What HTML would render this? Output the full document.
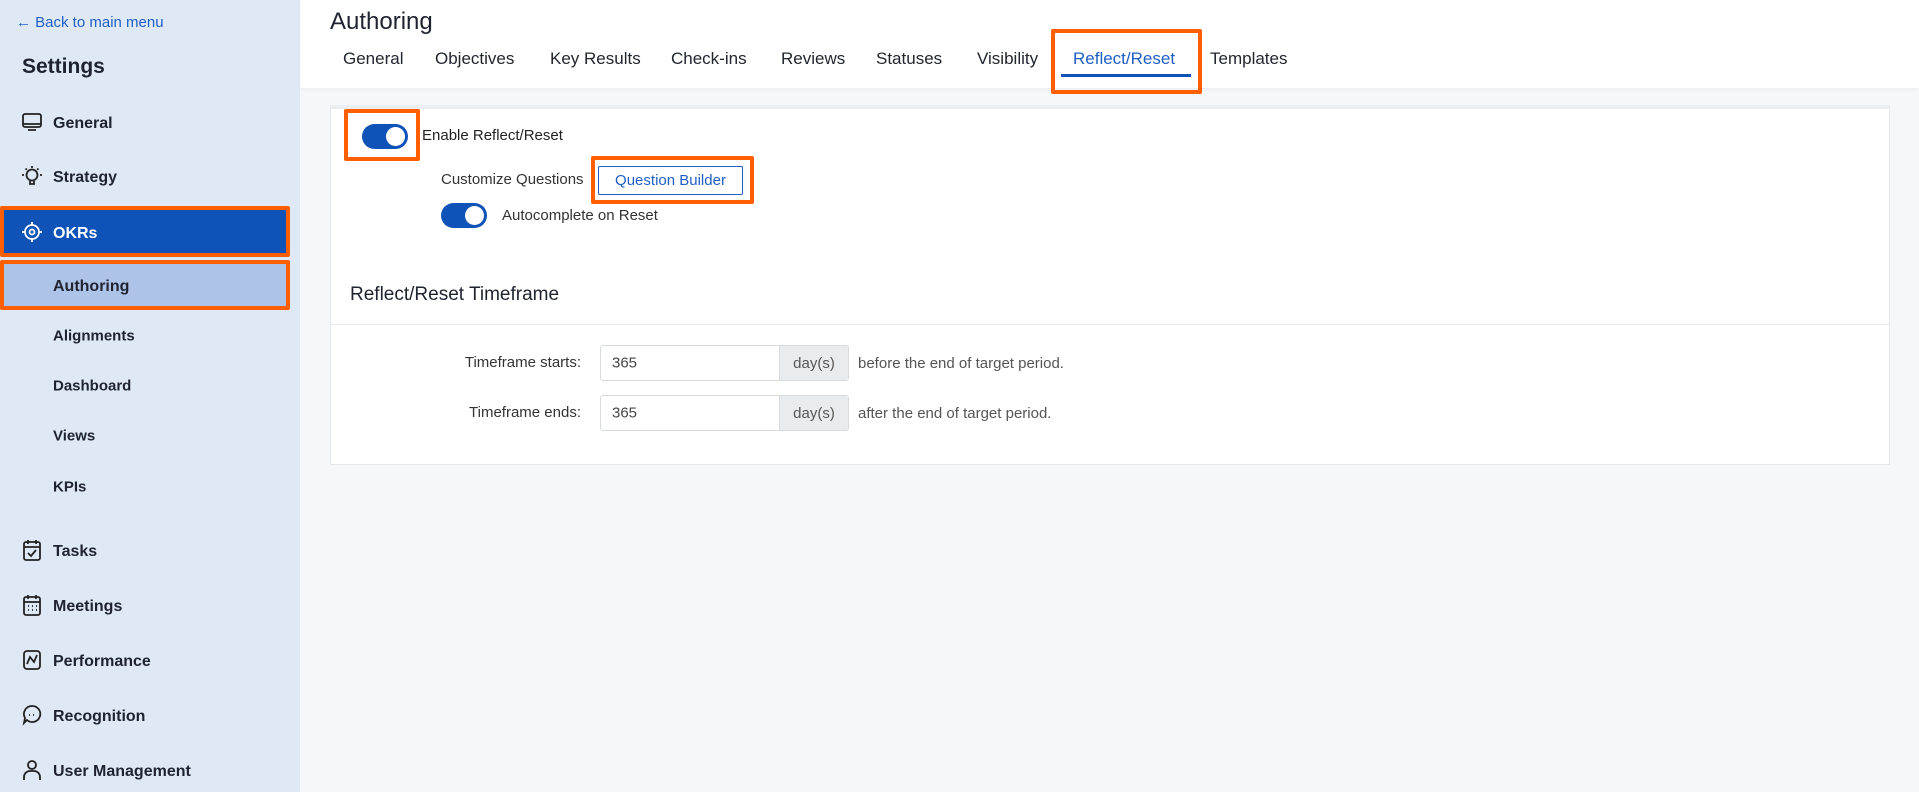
<!DOCTYPE html>
<html><head><meta charset="utf-8"><style>
*{box-sizing:border-box;margin:0;padding:0}
body{width:1919px;height:792px;overflow:hidden;font-family:"Liberation Sans",sans-serif;background:#f5f7fb;position:relative;color:#1f2330}
.sb{position:absolute;left:0;top:0;width:300px;height:792px;background:#dfe9f6}
.abs{position:absolute;white-space:nowrap}
.nav{position:absolute;left:53px;font-size:16px;font-weight:bold;color:#1f2330;transform:translateY(-50%);margin-top:2px}
.ico{position:absolute;left:21px;transform:translateY(-50%)}
.main-h{position:absolute;left:300px;top:0;width:1619px;height:88px;background:#fff;box-shadow:0 2px 4px rgba(0,0,0,.04)}
.tab{position:absolute;top:59px;transform:translateY(-50%);font-size:17px;color:#22262f}
.card{position:absolute;left:330px;top:105px;width:1560px;height:360px;background:#fff;border:1px solid #e4e7ec;border-top:4px solid #eceef2}
.tog{position:absolute;width:46px;height:25px;border-radius:13px;background:#0f53b8}
.tog:after{content:"";position:absolute;right:3px;top:3px;width:19px;height:19px;border-radius:50%;background:#fff}
.ob{position:absolute;border:4px solid #ff5f00;border-radius:2px}
.lbl{font-size:15px;color:#333}
.inp{position:absolute;left:600px;width:249px;height:36px;border:1px solid #d6d9de;border-radius:3px;background:#fff}
.inp span{position:absolute;left:11px;top:50%;transform:translateY(-50%);font-size:15px;color:#444}
.inp i{position:absolute;right:0;top:0;bottom:0;width:69px;background:#e9ecef;border-left:1px solid #d6d9de;font-style:normal;font-size:15px;color:#555;display:flex;align-items:center;justify-content:center}
</style></head><body>
<div class="sb"></div>
<div class="abs" style="left:16px;top:14px;font-size:15px;color:#1f5fc4">← Back to main menu</div>
<div class="abs" style="left:22px;top:55px;font-size:21px;font-weight:bold">Settings</div>

<svg class="ico" style="top:122px" width="22" height="22" viewBox="0 0 22 22" fill="none" stroke="#222" stroke-width="1.8"><rect x="2" y="3" width="18" height="13" rx="2"/><path d="M2 13h18M7 19h8"/></svg>
<div class="nav" style="top:122px">General</div>
<svg class="ico" style="top:176px" width="22" height="24" viewBox="0 0 22 24" fill="none" stroke="#222" stroke-width="1.8"><circle cx="11" cy="11" r="5.5"/><path d="M9 17v3h4v-3M11 2v2M3 11H1M21 11h-2M4.5 4.5l1.3 1.3M17.5 4.5l-1.3 1.3"/></svg>
<div class="nav" style="top:176px">Strategy</div>

<div class="abs" style="left:0;top:208px;width:290px;height:47px;background:#0f53b8"></div>
<div class="ob" style="left:0;top:206px;width:290px;height:51px"></div>
<svg class="ico" style="top:232px" width="22" height="22" viewBox="0 0 22 22" fill="none" stroke="#fff" stroke-width="1.8"><circle cx="11" cy="11" r="7"/><circle cx="11" cy="11" r="2.5"/><path d="M11 1v4M11 17v4M1 11h4M17 11h4"/></svg>
<div class="nav" style="top:232px;color:#fff">OKRs</div>
<div class="abs" style="left:0;top:261px;width:290px;height:47px;background:#aec3e8"></div>
<div class="ob" style="left:0;top:260px;width:290px;height:50px"></div>
<div class="nav" style="top:285px">Authoring</div>
<div class="nav" style="top:334px;font-size:15px">Alignments</div>
<div class="nav" style="top:384px;font-size:15px">Dashboard</div>
<div class="nav" style="top:434px;font-size:15px">Views</div>
<div class="nav" style="top:485px;font-size:15px">KPIs</div>

<svg class="ico" style="top:550px" width="22" height="24" viewBox="0 0 22 24" fill="none" stroke="#222" stroke-width="1.8"><rect x="3" y="4" width="16" height="18" rx="2"/><path d="M7 2v4M15 2v4M3 9h16M7 15l3 3 5-6"/></svg>
<div class="nav" style="top:550px">Tasks</div>
<svg class="ico" style="top:605px" width="22" height="24" viewBox="0 0 22 24" fill="none" stroke="#222" stroke-width="1.8"><rect x="3" y="4" width="16" height="18" rx="2"/><path d="M7 2v4M15 2v4M3 9h16M7 13h1M11 13h1M15 13h1M7 17h1M11 17h1M15 17h1"/></svg>
<div class="nav" style="top:605px">Meetings</div>
<svg class="ico" style="top:660px" width="22" height="24" viewBox="0 0 22 24" fill="none" stroke="#222" stroke-width="1.8"><rect x="3" y="3" width="16" height="18" rx="3"/><path d="M6 16l3-7 4 5 3-7"/></svg>
<div class="nav" style="top:660px">Performance</div>
<svg class="ico" style="top:715px" width="22" height="24" viewBox="0 0 22 24" fill="none" stroke="#222" stroke-width="1.8"><path d="M11 3a8 8 0 1 1-5 14l-3 3 1-5a8 8 0 0 1 7-12z"/><path d="M8 12h1M12 12h1"/></svg>
<div class="nav" style="top:715px">Recognition</div>
<svg class="ico" style="top:770px" width="22" height="24" viewBox="0 0 22 24" fill="none" stroke="#222" stroke-width="1.8"><circle cx="11" cy="7" r="4"/><path d="M3 22v-3a6 6 0 0 1 6-6h4a6 6 0 0 1 6 6v3"/></svg>
<div class="nav" style="top:770px">User Management</div>

<div class="main-h"></div>
<div class="abs" style="left:330px;top:8px;font-size:24px;color:#1f2330">Authoring</div>
<div class="tab" style="left:343px">General</div>
<div class="tab" style="left:435px">Objectives</div>
<div class="tab" style="left:550px">Key Results</div>
<div class="tab" style="left:671px">Check-ins</div>
<div class="tab" style="left:781px">Reviews</div>
<div class="tab" style="left:876px">Statuses</div>
<div class="tab" style="left:977px">Visibility</div>
<div class="tab" style="left:1073px;color:#1f5fc4">Reflect/Reset</div>
<div class="tab" style="left:1210px">Templates</div>
<div class="abs" style="left:1061px;top:74px;width:130px;height:3px;background:#0f53b8"></div>
<div class="ob" style="left:1051px;top:29px;width:151px;height:65px"></div>

<div class="card"></div>
<div class="tog" style="left:362px;top:124px"></div>
<div class="ob" style="left:344px;top:109px;width:76px;height:52px"></div>
<div class="abs lbl" style="left:422px;top:127px;color:#222">Enable Reflect/Reset</div>
<div class="abs lbl" style="left:441px;top:171px">Customize Questions</div>
<div class="abs" style="left:598px;top:166px;width:145px;height:29px;border:1px solid #1f5fc4;border-radius:2px;font-size:15px;color:#1f5fc4;display:flex;align-items:center;justify-content:center">Question Builder</div>
<div class="ob" style="left:591px;top:156px;width:163px;height:48px"></div>
<div class="tog" style="left:441px;top:203px"></div>
<div class="abs lbl" style="left:502px;top:207px">Autocomplete on Reset</div>

<div class="abs" style="left:350px;top:284px;font-size:19px;color:#1f2330">Reflect/Reset Timeframe</div>
<div class="abs" style="left:331px;top:324px;width:1558px;height:1px;background:#e8eaee"></div>
<div class="abs lbl" style="right:1338px;top:354px">Timeframe starts:</div>
<div class="inp" style="top:345px"><span>365</span><i>day(s)</i></div>
<div class="abs lbl" style="left:858px;top:355px;color:#555">before the end of target period.</div>
<div class="abs lbl" style="right:1338px;top:404px">Timeframe ends:</div>
<div class="inp" style="top:395px"><span>365</span><i>day(s)</i></div>
<div class="abs lbl" style="left:858px;top:405px;color:#555">after the end of target period.</div>
</body></html>
